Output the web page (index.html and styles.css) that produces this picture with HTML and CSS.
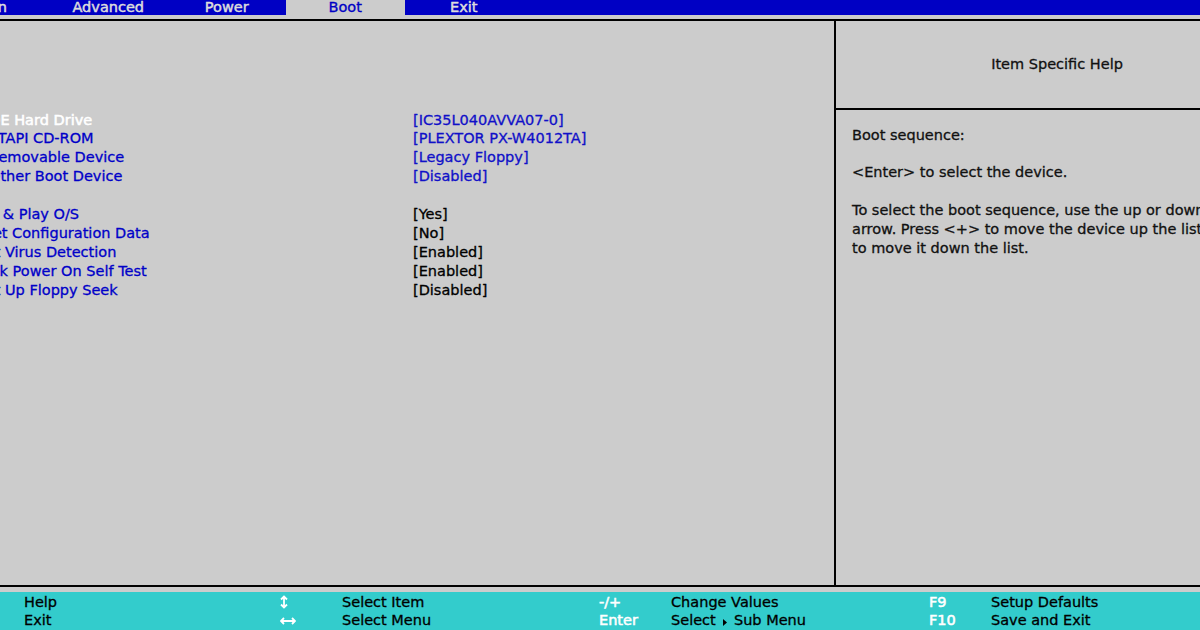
FILE: index.html
```html
<!DOCTYPE html>
<html>
<head>
<meta charset="utf-8">
<title>BIOS Setup Utility - Boot</title>
<link rel="stylesheet" href="styles.css">
</head>
<body>
<div class="screen">
  <nav class="menubar">
    <div class="tab">Main</div>
    <div class="tab">Advanced</div>
    <div class="tab">Power</div>
    <div class="tab active">Boot</div>
    <div class="tab">Exit</div>
  </nav>

  <div class="main">
    <section class="settings">
      <div class="group boot-seq">
        <div class="row selected"><span class="label">IDE Hard Drive</span><span class="value link">[IC35L040AVVA07-0]</span></div>
        <div class="row"><span class="label">ATAPI CD-ROM</span><span class="value link">[PLEXTOR PX-W4012TA]</span></div>
        <div class="row"><span class="label">Removable Device</span><span class="value link">[Legacy Floppy]</span></div>
        <div class="row"><span class="label">Other Boot Device</span><span class="value link">[Disabled]</span></div>
      </div>
      <div class="group options">
        <div class="row"><span class="label">Plug &amp; Play O/S</span><span class="value">[Yes]</span></div>
        <div class="row"><span class="label">Reset Configuration Data</span><span class="value">[No]</span></div>
        <div class="row"><span class="label">Boot Virus Detection</span><span class="value">[Enabled]</span></div>
        <div class="row"><span class="label">Quick Power On Self Test</span><span class="value">[Enabled]</span></div>
        <div class="row"><span class="label">Boot Up Floppy Seek</span><span class="value">[Disabled]</span></div>
      </div>
    </section>

    <aside class="help">
      <div class="help-title">Item Specific Help</div>
      <div class="help-body">
        <p>Boot sequence:</p>
        <p>&lt;Enter&gt; to select the device.</p>
        <p>To select the boot sequence, use the up or down<br>arrow. Press &lt;+&gt; to move the device up the list, or &lt;-&gt;<br>to move it down the list.</p>
      </div>
    </aside>
  </div>

  <footer class="keybar">
    <span class="key">F1</span><span class="desc">Help</span>
    <span class="key icon"><svg width="8" height="14" viewBox="0 0 8 14"><path d="M4 1.5V12.5M1 4.5L4 1.5L7 4.5M1 9.5L4 12.5L7 9.5" fill="none" stroke="#fff" stroke-width="1.8"/></svg></span><span class="desc">Select Item</span>
    <span class="key">-/+</span><span class="desc">Change Values</span>
    <span class="key">F9</span><span class="desc">Setup Defaults</span>

    <span class="key">Esc</span><span class="desc">Exit</span>
    <span class="key icon"><svg width="16" height="8" viewBox="0 0 16 8"><path d="M1 4H15M4 1L1 4L4 7M12 1L15 4L12 7" fill="none" stroke="#fff" stroke-width="1.8"/></svg></span><span class="desc">Select Menu</span>
    <span class="key">Enter</span><span class="desc">Select <svg class="tri" width="4" height="7" viewBox="0 0 4 7"><path d="M0 0L4 3.5L0 7Z" fill="#000"/></svg> Sub Menu</span>
    <span class="key">F10</span><span class="desc">Save and Exit</span>
  </footer>
</div>
</body>
</html>
```

FILE: styles.css
```css
html, body {
  margin: 0;
  padding: 0;
}

body {
  width: 1200px;
  height: 630px;
  overflow: hidden;
  background: #cccccc;
  font-family: "DejaVu Sans", Verdana, sans-serif;
  font-size: 14.5px;
  color: #000;
  -webkit-text-stroke: 0.3px currentColor;
}

.screen {
  width: 1200px;
  height: 630px;
  display: flex;
  flex-direction: column;
}

/* ---------- top menu bar ---------- */
.menubar {
  height: 15px;
  background: #0000c4;
  display: flex;
  margin-left: -69.5px;
  margin-bottom: 4px;
  width: 1269.5px;
}

.tab {
  width: 118.5px;
  flex: none;
  text-align: center;
  line-height: 15px;
  color: #dcdcdc;
  white-space: nowrap;
  -webkit-text-stroke: 0.5px currentColor;
}

.tab.active {
  background: #cccccc;
  color: #0000c4;
  -webkit-text-stroke: 0.3px currentColor;
}

/* ---------- main area ---------- */
.main {
  box-sizing: border-box;
  width: 1340px;
  height: 568px;
  margin-left: -60px;
  border: 2px solid #000;
  display: flex;
  flex: none;
}

.settings {
  width: 892px;
  flex: none;
  padding: 89.5px 0 0 25px;
  box-sizing: border-box;
}

.group.options {
  margin-top: 18.9px;
}

.row {
  display: grid;
  grid-template-columns: 446px 1fr;
  line-height: 18.9px;
  white-space: nowrap;
}

.label {
  color: #0000c8;
}

.boot-seq .label {
  padding-left: 22px;
}

.row.selected .label {
  color: #ffffff;
  -webkit-text-stroke: 0.55px currentColor;
  margin-left: -4px;
}

.value {
  color: #000;
}

.value.link {
  color: #1010c8;
}

/* ---------- help panel ---------- */
.help {
  flex: 1;
  border-left: 2px solid #000;
  display: flex;
  flex-direction: column;
}

.help-title {
  height: 87px;
  border-bottom: 2px solid #000;
  display: flex;
  align-items: center;
  justify-content: center;
  line-height: 19px;
  color: #111;
}

.help-body {
  padding: 15.5px 0 0 16px;
  line-height: 18.9px;
  color: #111;
  white-space: nowrap;
  overflow: hidden;
}

.help-body p {
  margin: 0 0 18.9px 0;
}

/* ---------- bottom key bar ---------- */
.keybar {
  margin-top: 5px;
  flex: 1;
  background: #33cccc;
  display: grid;
  grid-template-columns: 64px 256px 62px 257px 72px 258px 62px 1fr;
  grid-auto-rows: 18.4px;
  line-height: 18.4px;
  padding-top: 1px;
  margin-left: -40px;
  white-space: nowrap;
}

.key {
  color: #ffffff;
  -webkit-text-stroke: 0.55px currentColor;
}

.key.icon {
  display: flex;
  align-items: center;
}

.desc {
  color: #000;
}

.tri {
  vertical-align: -1px;
  margin: 0 2px 0 3px;
}
```
